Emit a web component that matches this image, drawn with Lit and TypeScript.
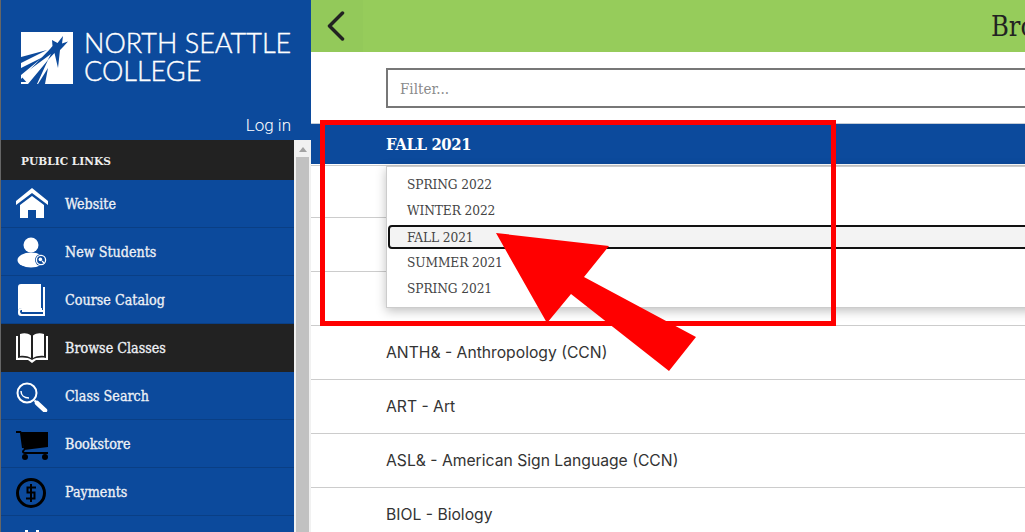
import { LitElement, html, css, svg } from "lit";
import { customElement } from "lit/decorators.js";

const icons: Record<string, unknown> = {
  home: svg`<path fill="#fff" d="M16 0 32 13v4L16 5 0 17v-4z"/><path fill="#fff" d="M4 17 16 8l12 9v13h-8v-8h-8v8H4z"/>`,
  student: svg`<circle cx="15" cy="9" r="7.5" fill="#fff"/><ellipse cx="15" cy="24" rx="13.5" ry="7.5" fill="#fff"/><circle cx="25" cy="24" r="6" fill="#0c4a9c"/><circle cx="25" cy="24" r="4.6" fill="none" stroke="#fff" stroke-width="1.3"/><circle cx="24.4" cy="23.4" r="1.8" fill="#fff"/><path d="M26 25l2 2" stroke="#fff" stroke-width="1.2"/>`,
  book: svg`<path fill="#fff" d="M5 0h20v24H6c-2 0-4 1-4 3V3c0-2 1-3 3-3z"/><path fill="#fff" d="M27 3h2v29H5c-2 0-3-1-3-3v-2c0-2 1-3 4-3h20v2H6c-1 0-2 .4-2 1.500S5 30 6 30h21z"/><rect x="6" y="26" width="21" height="2" fill="#fff"/>`,
  open: svg`<path fill="#fff" d="M0 4h2v22c5-1 10-.5 14 2 4-2.500 9-3 14-2V4h2v24H20l-4 3-4-3H0z"/><path fill="#fff" d="M4 2c4-1.500 8-1 11 1.500V26c-3-2-7-2.500-11-2zM28 2c-4-1.500-8-1-11 1.500V26c3-2 7-2.500 11-2z"/>`,
  search: svg`<circle cx="11" cy="13" r="9.500" fill="none" stroke="#fff" stroke-width="2"/><path d="M5 11c0 4 3 7 8 7" fill="none" stroke="#fff" stroke-width="1.500"/><path d="M18.500 20.500 21 23" stroke="#fff" stroke-width="2"/><path d="M21 23l8 7.500" stroke="#fff" stroke-width="4.500" stroke-linecap="round"/>`,
  cart: svg`<path d="M0 3h5l1 2 2 15h-2L4 5H0z" fill="#000"/><path d="M5 4h27v15L8 22z" fill="#000"/><path d="M9 21c-4 .5-4 5 0 5h23v-2H9c-1.500 0-1.500-1.500 0-1.500z" fill="#000"/><circle cx="9" cy="29" r="3" fill="#000"/><circle cx="29" cy="29" r="3" fill="#000"/>`,
  pay: svg`<circle cx="15" cy="17" r="13.500" fill="none" stroke="#000" stroke-width="3"/><path d="M20 11.500h-8.500v5h7v6H10M15 8v18" fill="none" stroke="#000" stroke-width="2"/>`,
  cal: svg`<path fill="#fff" d="M6 9h3V6h3v3h8V6h3v3h3v23H1V13h5zM13 11h6v3h-6z"/>`,
};

const links = [
  ["home", "Website"],
  ["student", "New Students"],
  ["book", "Course Catalog"],
  ["open", "Browse Classes"],
  ["search", "Class Search"],
  ["cart", "Bookstore"],
  ["pay", "Payments"],
  ["cal", ""],
];

const subjects = ["", "", "", "ANTH& - Anthropology (CCN)", "ART - Art", "ASL& - American Sign Language (CCN)", "BIOL - Biology"];

const terms = ["SPRING 2022", "WINTER 2022", "FALL 2021", "SUMMER 2021", "SPRING 2021"];

@customElement("app-root")
export class AppRoot extends LitElement {
  static styles = css`
    :host {
      display: flex;
      position: relative;
      width: 100vw;
      height: 100vh;
      overflow: hidden;
      background: #fff;
      --slab: "DejaVu Serif", "Liberation Serif", serif;
    }
    .side {
      flex: 0 0 311px;
      width: 311px;
      min-width: 0;
      box-sizing: border-box;
      border-left: 1px solid #666;
      background: #0c4a9c;
      display: flex;
      flex-direction: column;
      min-height: 0;
    }
    .brand {
      flex: 0 0 140px;
      box-sizing: border-box;
      padding: 32px 20px 0 20px;
      display: flex;
      flex-direction: column;
    }
    .logo {
      display: flex;
      gap: 11px;
      height: 52px;
    }
    .logo svg { flex: none; }
    .wordmark {
      color: #fff;
      font: 300 27px/28px Lato, sans-serif;
      white-space: nowrap;
      -webkit-text-stroke: 0.4px #fff;
      margin-top: -3px;
    }
    .login {
      margin-top: 29px;
      align-self: flex-end;
      color: #fff;
      font: 300 17px/24px Roboto, sans-serif;
    }
    .nav-wrap {
      flex: 1;
      display: flex;
      min-height: 0;
    }
    .nav {
      flex: 1;
      min-width: 0;
      overflow: hidden;
    }
    .nav-title {
      height: 40px;
      box-sizing: border-box;
      background: #222;
      color: #eee;
      padding: 1px 0 0 20px;
      display: flex;
      align-items: center;
      font: 700 11.8px var(--slab);
      font-stretch: condensed;
    }
    .link {
      height: 48px;
      box-sizing: border-box;
      border-bottom: 1px solid #0a3f85;
      padding-left: 15px;
      display: flex;
      align-items: center;
      gap: 17px;
      color: #eef1f6;
      font: 400 14.2px var(--slab);
      font-stretch: condensed;
      -webkit-text-stroke: 0.3px #eef1f6;
    }
    .link.active {
      background: #222;
      border-bottom-color: #222;
    }
    .link svg { flex: none; }
    .bar {
      flex: 0 0 17px;
      background: #f1f1f1;
      display: flex;
      flex-direction: column;
      align-items: center;
    }
    .up {
      margin-top: 7px;
      width: 0;
      height: 0;
      border: 4px solid transparent;
      border-top-width: 0;
      border-bottom: 5px solid #a3a3a3;
    }
    .thumb {
      margin: 5px 2px 0 0;
      align-self: flex-end;
      width: 13px;
      flex: 1;
      background: #c1c1c1;
    }
    .main {
      flex: 1;
      min-width: 0;
      position: relative;
      display: flex;
      flex-direction: column;
    }
    .head {
      flex: 0 0 52px;
      background: #96cc5b;
      display: flex;
      align-items: center;
      white-space: nowrap;
    }
    .back {
      flex: 0 0 52px;
      height: 52px;
      background: #93c95a;
      display: flex;
      align-items: center;
      justify-content: center;
    }
    .title {
      margin-left: 628px;
      color: #222;
      font: 400 27px var(--slab);
      font-stretch: condensed;
    }
    .filter {
      flex: none;
      padding: 16px 0 15px 75px;
    }
    .filter input {
      display: block;
      width: 800px;
      height: 40px;
      box-sizing: border-box;
      border: 2px solid #777;
      padding: 2px 12px 0;
      outline: none;
      font: 400 15px var(--slab);
      font-stretch: condensed;
      background: #fff;
    }
    .filter input::placeholder { color: #8a8a8a; opacity: 1; }
    .term {
      flex: none;
      height: 41px;
      box-sizing: border-box;
      border-top: 1px solid #c4ccd6;
      background: #0c4a9c;
      color: #fff;
      padding: 1px 0 0 75px;
      display: flex;
      align-items: center;
      font: 700 16.5px var(--slab);
      font-stretch: condensed;
      letter-spacing: -0.35px;
    }
    .rule {
      flex: none;
      height: 1px;
      margin-top: 1px;
      background: #ccc;
    }
    .rows { flex: none; }
    .row {
      height: 54px;
      box-sizing: border-box;
      border-bottom: 1px solid #ccc;
      padding-left: 75px;
      display: flex;
      align-items: center;
      color: #333;
      font: 400 15.7px Inter, sans-serif;
      white-space: nowrap;
    }
    .row:first-child { height: 52px; }
    .menu {
      position: absolute;
      left: 75px;
      top: 166px;
      width: 800px;
      height: 142px;
      box-sizing: border-box;
      padding: 5px 0 5px 1px;
      background: #fff;
      border: 1px solid #ccc;
      box-shadow: 0 3px 10px rgba(0, 0, 0, 0.25);
    }
    .opt {
      height: 26px;
      box-sizing: border-box;
      padding: 0 0 2px 19px;
      display: flex;
      align-items: center;
      color: #444;
      font: 400 13.6px var(--slab);
      font-stretch: condensed;
      letter-spacing: -0.1px;
    }
    .opt.on {
      padding: 0 0 1px 17px;
      border: 2px solid #111;
      border-radius: 4px;
      background: #f3f3f3;
      height: 24px;
      margin: 1px 0;
    }
    .box {
      position: absolute;
      left: 320px;
      top: 120px;
      width: 516px;
      height: 206px;
      box-sizing: border-box;
      border: 5px solid #f00;
      pointer-events: none;
    }
    .arrow {
      position: absolute;
      left: 0;
      top: 0;
      pointer-events: none;
    }
  `;

  render() {
    return html`
      <aside class="side">
        <div class="brand">
          <div class="logo">
            <svg width="52" height="52" viewBox="0 0 52 52">
              <rect width="52" height="52" fill="#fff"/>
              <path fill="#0c4a9c" d="M31 8 36.500 11 42 4 41 11.500 47 9.500 42 15 39 18 37 36 33.500 21 6 50 H0 V47 L29 17 31.500 14z"/>
              <path fill="#fff" d="M0 32 28 18 0 38zM0 44 30 22 14 52H7zM17 52 30 30l-5 22z"/>
              <path fill="#0c4a9c" d="M0 25 26 18 0 31zM0 36 22 25 0 43zM7 52 27 28 16 52zM17 52 27 36l-3 16z"/>
            </svg>
            <div class="wordmark">NORTH SEATTLE<br />COLLEGE</div>
          </div>
          <div class="login">Log in</div>
        </div>
        <div class="nav-wrap">
          <nav class="nav">
            <div class="nav-title">PUBLIC LINKS</div>
            ${links.map(
              ([icon, label]) => html`
                <div class="link ${label === "Browse Classes" ? "active" : ""}">
                  <svg width="32" height="32" viewBox="0 0 32 32">${icons[icon]}</svg>
                  <span>${label}</span>
                </div>
              `
            )}
          </nav>
          <div class="bar">
            <div class="up"></div>
            <div class="thumb"></div>
          </div>
        </div>
      </aside>
      <main class="main">
        <header class="head">
          <div class="back">
            <svg width="20" height="30" viewBox="0 0 20 30">
              <path d="M15.500 2 2.500 15l13 13" fill="none" stroke="#222" stroke-width="3.500" stroke-linecap="round" stroke-linejoin="round"/>
            </svg>
          </div>
          <div class="title">Browse Classes</div>
        </header>
        <div class="filter"><input placeholder="Filter..." /></div>
        <div class="term">FALL 2021</div>
        <div class="rule"></div>
        <div class="rows">${subjects.map((s) => html`<div class="row">${s}</div>`)}</div>
        <div class="menu">
          ${terms.map((t, i) => html`<div class="opt ${i === 2 ? "on" : ""}">${t}</div>`)}
        </div>
      </main>
      <div class="box"></div>
      <svg class="arrow" width="1025" height="532" viewBox="0 0 1025 532">
        <polygon fill="#f00" points="496,233 609,246 584,277 696,337 669,371 571,294 547,323"/>
      </svg>
    `;
  }
}
